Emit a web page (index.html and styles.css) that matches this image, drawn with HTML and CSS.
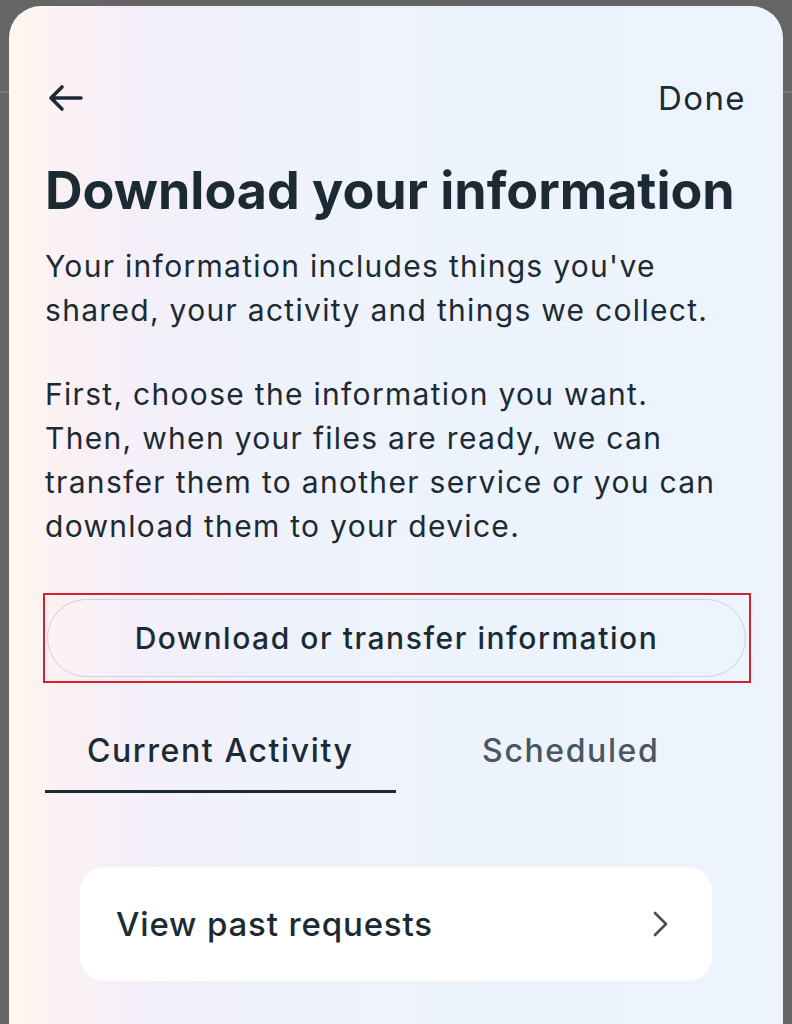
FILE: index.html
```html
<!doctype html>
<html>
<head>
<meta charset="utf-8">
<title>Download your information</title>
<link rel="stylesheet" href="styles.css">
</head>
<body>
<div class="sheet">
	<div class="topbar">
		<a class="back" href="#">
			<svg width="36" height="28" viewBox="0 0 36 28"><path d="M34 14H4M15 3L4 14L15 25" fill="none" stroke="#1c2b33" stroke-width="3.6" stroke-linecap="round" stroke-linejoin="round"/></svg>
		</a>
		<span class="done">Done</span>
	</div>

	<h1 class="title">Download your information</h1>
	<p class="text">Your information includes things you've shared, your activity and things we collect.</p>
	<p class="text">First, choose the information you want. Then, when your files are ready, we can transfer them to another service or you can download them to your device.</p>

	<div class="mark">
		<div class="pill">Download or transfer information</div>
	</div>

	<ul class="tabs">
		<li class="tab cur">Current Activity</li>
		<li class="tab">Scheduled</li>
	</ul>

	<div class="card">
		<span>View past requests</span>
		<svg width="18" height="28" viewBox="0 0 18 28"><path d="M3 3L14 14L3 25" fill="none" stroke="#454e55" stroke-width="2.6" stroke-linecap="round" stroke-linejoin="round"/></svg>
	</div>
</div>
</body>
</html>
```
FILE: styles.css
```css
*{margin:0;padding:0;list-style:none;box-sizing:border-box;}
body{ background:#656565 linear-gradient(180deg, #656565 0, #656565 91px, #7b7b7b 91px, #7b7b7b 93px, #656565 93px); font-family:Inter, "Noto Sans", sans-serif; color:#1c2b33; }
.sheet{ margin:6px 9px 0; min-height:1018px; border-radius:32px 32px 0 0; padding:0 37px 0 36px;
 background:linear-gradient(90deg, #fff7ef 0%, #fbf1f4 7%, #f4eff9 17%, #eff2fb 32%, #edf3fc 60%, #eef4fd 100%); }
.topbar{ display:flex; justify-content:space-between; align-items:center; padding-top:74px; }
.back{ display:block; width:36px; height:28px; margin-left:2px; }
.done{ font-size:33px; line-height:36px; font-weight:400; letter-spacing:1.4px; }
.title{ font-size:52px; font-weight:700; margin-top:45px; line-height:60px; }
.text{ font-size:30px; line-height:44px; margin-top:23px; letter-spacing:1.3px; padding-right:21px; }
.text + .text{ margin-top:40px; }
.mark{ margin:45px -5px 0 -2px; border:2px solid #d1232f; padding:4px 3px 4px 2px; }
.pill{ height:78px; border:1px solid #cdd2d7; border-radius:40px; display:flex; align-items:center; justify-content:center; font-weight:500; font-size:30px; letter-spacing:1.55px; }
.tabs{ display:flex; margin-top:38px; }
.tab{ width:352px; text-align:center; font-weight:500; font-size:32px; line-height:40px; letter-spacing:1.6px; padding:10px 0 19px; border-bottom:3px solid transparent; }
.tab.cur{ border-color:#1c2b33; }
.tab + .tab{ color:#4a5761; }
.card{ margin:74px 34px 0 35px; height:114px; background:#fff; border-radius:24px; display:flex; align-items:center; justify-content:space-between; padding:0 42px 0 36px; font-weight:500; font-size:33px; letter-spacing:0.85px; }
```
